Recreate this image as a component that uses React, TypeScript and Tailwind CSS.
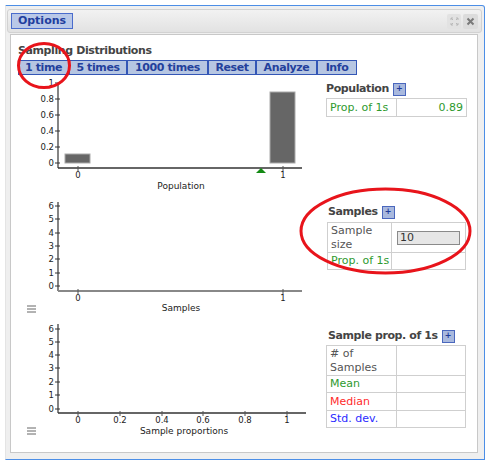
import React from "react";

const FONT = "DejaVu Sans, Verdana, sans-serif";

function YAxis({ x, ticks }: { x: number; ticks: [number, string][] }) {
  return (
    <g>
      {ticks.map(([y, label]) => (
        <g key={label}>
          <line x1={x - 3} x2={x + 2} y1={y} y2={y} stroke="#333" strokeWidth={1} />
          <text x={x - 4} y={y + 3} fontSize={8.5} textAnchor="end" fill="#222" fontFamily={FONT}>
            {label}
          </text>
        </g>
      ))}
    </g>
  );
}

function XTicks({ y, ticks }: { y: number; ticks: [number, string][] }) {
  return (
    <g>
      {ticks.map(([x, label]) => (
        <g key={label}>
          <line x1={x} x2={x} y1={y - 2} y2={y + 3} stroke="#555" strokeWidth={1} />
          <text x={x} y={y + 10} fontSize={8.5} textAnchor="middle" fill="#222" fontFamily={FONT}>
            {label}
          </text>
        </g>
      ))}
    </g>
  );
}

function Hamburger({ y }: { y: number }) {
  return (
    <g stroke="#666" strokeWidth={1}>
      <line x1={16} x2={25} y1={y} y2={y} />
      <line x1={16} x2={25} y1={y + 3} y2={y + 3} />
      <line x1={16} x2={25} y1={y + 6} y2={y + 6} />
    </g>
  );
}

function PopulationChart() {
  return (
    <svg width={315} height={118} className="block">
      <line x1={47} x2={47} y1={6} y2={91} stroke="#333" strokeWidth={1.2} />
      <YAxis x={47} ticks={[[6, "1"], [22, "0.8"], [38, "0.6"], [54, "0.4"], [70, "0.2"], [86, "0"]]} />
      <rect x={54} y={77} width={25} height={9} fill="#666" stroke="#aaa" strokeWidth={1} />
      <rect x={259} y={15} width={25} height={71} fill="#666" stroke="#aaa" strokeWidth={1} />
      <line x1={47} x2={291} y1={91} y2={91} stroke="#333" strokeWidth={1.5} />
      <XTicks y={91} ticks={[[67, "0"], [272, "1"]]} />
      <polygon points="245,96 255,96 250,91" fill="#138a13" />
      <text x={170} y={112} fontSize={9} textAnchor="middle" fill="#222" fontFamily={FONT}>
        Population
      </text>
    </svg>
  );
}

function SamplesChart() {
  return (
    <svg width={315} height={123} className="block">
      <line x1={47} x2={47} y1={7} y2={96} stroke="#333" strokeWidth={1.2} />
      <YAxis
        x={47}
        ticks={[[11, "6"], [24, "5"], [38, "4"], [51, "3"], [64, "2"], [78, "1"], [91, "0"]]}
      />
      <line x1={47} x2={291} y1={96} y2={96} stroke="#888" strokeWidth={2} />
      <XTicks y={96} ticks={[[67, "0"], [272, "1"]]} />
      <Hamburger y={111} />
      <text x={170} y={116} fontSize={9} textAnchor="middle" fill="#222" fontFamily={FONT}>
        Samples
      </text>
    </svg>
  );
}

function ProportionsChart() {
  return (
    <svg width={315} height={122} className="block">
      <line x1={47} x2={47} y1={6} y2={95} stroke="#333" strokeWidth={1.2} />
      <YAxis
        x={47}
        ticks={[[11, "6"], [24, "5"], [37, "4"], [50, "3"], [64, "2"], [77, "1"], [91, "0"]]}
      />
      <line x1={47} x2={295} y1={95} y2={95} stroke="#333" strokeWidth={1.5} />
      <XTicks
        y={95}
        ticks={[[67, "0"], [109, "0.2"], [151, "0.4"], [192, "0.6"], [234, "0.8"], [276, "1"]]}
      />
      <Hamburger y={110} />
      <text x={173} y={116} fontSize={9} textAnchor="middle" fill="#222" fontFamily={FONT}>
        Sample proportions
      </text>
    </svg>
  );
}

function PlusButton() {
  return (
    <span className="inline-flex items-center justify-center w-[13px] h-[13px] bg-[#a9b9de] border border-[#4a67bd] text-[#1d3a9a] text-[8px] leading-none font-bold">
      +
    </span>
  );
}

function Heading({ title }: { title: string }) {
  return (
    <div className="flex items-center gap-[4px] h-[14px]">
      <span className="text-[11px] font-bold tracking-[-0.4px] text-[#444] leading-[14px]">{title}</span>
      <PlusButton />
    </div>
  );
}

const buttons: [string, string][] = [
  ["1 time", "w-[51px]"],
  ["5 times", "w-[58px]"],
  ["1000 times", "w-[81px]"],
  ["Reset", "w-[48px]"],
  ["Analyze", "w-[61px]"],
  ["Info", "w-[40px]"],
];

export default function App() {
  return (
    <div className="relative w-[490px] h-[468px] bg-white overflow-hidden font-[DejaVu_Sans,Verdana,sans-serif]">
      <div className="ml-[5px] mt-[5px] w-[480px] h-[455px] border border-[#4c8ee6] border-l-[#e4e4e4] rounded-tr-[3px] bg-[#efefef] flex flex-col">
        {/* title bar */}
        <div className="mt-[3px] ml-[1px] mr-[2px] h-[24px] rounded-[3px] border border-[#d2d2d2] bg-gradient-to-b from-[#f2f2f2] to-[#e2e2e2] flex items-center justify-between pl-[3px] pr-[3px]">
          <button className="h-[16px] w-[62px] bg-[#b9c8e8] border border-[#4a6ccc] text-[11px] font-bold text-[#1f3e9e] leading-[14px]">
            Options
          </button>
          <div className="flex gap-[2px]">
            <span className="w-[14px] h-[15px] rounded-[2px] bg-[#e2e2e2] flex items-center justify-center">
              <svg width="9" height="9" viewBox="0 0 9 9" fill="none" stroke="#b8b8b8" strokeWidth="1">
                <path d="M1 1l2 2M1 1h2M1 1v2M8 1l-2 2M8 1h-2M8 1v2M1 8l2-2M1 8h2M1 8v-2M8 8l-2-2M8 8h-2M8 8v-2" />
              </svg>
            </span>
            <span className="w-[15px] h-[15px] rounded-[2px] bg-[#dcdcdc] flex items-center justify-center">
              <svg width="9" height="9" viewBox="0 0 9 9" stroke="#7a7a7a" strokeWidth="2">
                <path d="M1.5 1.5l6 6M7.5 1.5l-6 6" />
              </svg>
            </span>
          </div>
        </div>

        {/* main panel */}
        <div className="mt-[1px] ml-[4px] w-[468px] h-[419px] bg-white border border-[#c8c8c8]">
          <div className="px-[7px] pt-[9px]">
            <div className="text-[11px] leading-[13px] font-bold tracking-[-0.4px] text-[#444]">
              Sampling Distributions
            </div>
            <div className="mt-[3px] flex">
              {buttons.map(([label, w]) => (
                <button
                  key={label}
                  className={`${w} h-[15px] bg-[#b6c6e2] border border-[#3356b6] text-[11px] leading-[13px] font-bold tracking-[-0.4px] text-[#23409c]`}
                >
                  {label}
                </button>
              ))}
            </div>
          </div>

          <div className="mt-[2px] flex">
            <div className="w-[315px] flex flex-col">
              <PopulationChart />
              <SamplesChart />
              <ProportionsChart />
            </div>

            <div className="w-[141px] flex flex-col text-[11px] leading-[14px]">
              <div className="mt-[5px]">
                <Heading title="Population" />
              </div>
              <table className="mt-[2px] w-[141px] border-collapse border border-[#cfcfcf]">
                <tbody>
                  <tr className="h-[18px]">
                    <td className="w-[70px] border border-[#cfcfcf] pl-[3px] text-[#2e9a2e]">Prop. of 1s</td>
                    <td className="border border-[#cfcfcf] pr-[3px] text-right text-[#2e9a2e]">0.89</td>
                  </tr>
                </tbody>
              </table>

              <div className="mt-[88px] pl-[2px]">
                <Heading title="Samples" />
              </div>
              <table className="mt-[3px] ml-[1px] w-[139px] border-collapse border border-[#cfcfcf]">
                <tbody>
                  <tr className="h-[30px]">
                    <td className="w-[64px] border border-[#cfcfcf] pl-[3px] text-[#555]">
                      Sample
                      <br />
                      size
                    </td>
                    <td className="border border-[#cfcfcf] pl-[5px]">
                      <div className="w-[63px] h-[14px] bg-[#e6e6e6] border border-[#8a8a8a] pl-[2px] text-[11px] leading-[12px] text-[#333]">
                        10
                      </div>
                    </td>
                  </tr>
                  <tr className="h-[17px]">
                    <td className="border border-[#cfcfcf] pl-[3px] text-[#2e9a2e]">Prop. of 1s</td>
                    <td className="border border-[#cfcfcf]"></td>
                  </tr>
                </tbody>
              </table>

              <div className="mt-[59px] pl-[2px]">
                <Heading title="Sample prop. of 1s" />
              </div>
              <table className="mt-[2px] w-[140px] border-collapse border border-[#cfcfcf]">
                <tbody>
                  <tr className="h-[30px]">
                    <td className="w-[70px] border border-[#cfcfcf] pl-[3px] text-[#555]">
                      # of
                      <br />
                      Samples
                    </td>
                    <td className="border border-[#cfcfcf]"></td>
                  </tr>
                  <tr className="h-[17px]">
                    <td className="border border-[#cfcfcf] pl-[3px] text-[#2e9a2e]">Mean</td>
                    <td className="border border-[#cfcfcf]"></td>
                  </tr>
                  <tr className="h-[18px]">
                    <td className="border border-[#cfcfcf] pl-[3px] text-[#ff2b2b]">Median</td>
                    <td className="border border-[#cfcfcf]"></td>
                  </tr>
                  <tr className="h-[17px]">
                    <td className="border border-[#cfcfcf] pl-[3px] text-[#2b2bff]">Std. dev.</td>
                    <td className="border border-[#cfcfcf]"></td>
                  </tr>
                </tbody>
              </table>
            </div>
          </div>
        </div>
      </div>

      {/* red annotation circles */}
      <svg className="absolute left-0 top-0 pointer-events-none" width={490} height={468}>
        <ellipse cx={44} cy={65.5} rx={25.5} ry={22} fill="none" stroke="#e8141b" strokeWidth={3} />
        <ellipse cx={385.5} cy={231} rx={84.5} ry={42} fill="none" stroke="#e8141b" strokeWidth={3} />
      </svg>
    </div>
  );
}
